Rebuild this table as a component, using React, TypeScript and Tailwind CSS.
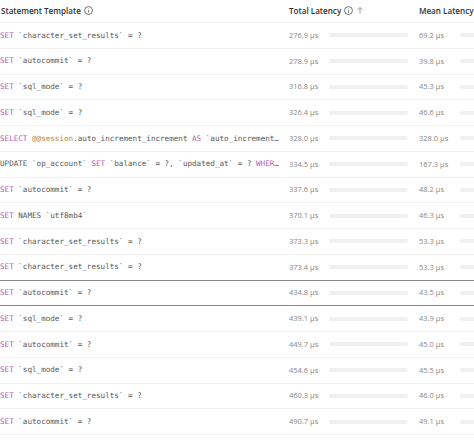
import React from "react";

type Part = { t: string; k?: "kw" | "var" };

const rows: { parts: Part[]; total: string; mean: string; selected?: boolean }[] = [
  { parts: [{ t: "SET", k: "kw" }, { t: " `character_set_results` = ?" }], total: "276.9 μs", mean: "69.2 μs" },
  { parts: [{ t: "SET", k: "kw" }, { t: " `autocommit` = ?" }], total: "278.9 μs", mean: "39.8 μs" },
  { parts: [{ t: "SET", k: "kw" }, { t: " `sql_mode` = ?" }], total: "316.8 μs", mean: "45.3 μs" },
  { parts: [{ t: "SET", k: "kw" }, { t: " `sql_mode` = ?" }], total: "326.4 μs", mean: "46.6 μs" },
  {
    parts: [
      { t: "SELECT", k: "kw" },
      { t: " " },
      { t: "@@session", k: "var" },
      { t: ".auto_increment_increment " },
      { t: "AS", k: "kw" },
      { t: " `auto_increment_increment`" },
    ],
    total: "328.0 μs",
    mean: "328.0 μs",
  },
  {
    parts: [
      { t: "UPDATE `op_account` " },
      { t: "SET", k: "kw" },
      { t: " `balance` = ?, `updated_at` = ? " },
      { t: "WHERE", k: "kw" },
      { t: " `id` = ?" },
    ],
    total: "334.5 μs",
    mean: "167.3 μs",
  },
  { parts: [{ t: "SET", k: "kw" }, { t: " `autocommit` = ?" }], total: "337.6 μs", mean: "48.2 μs" },
  { parts: [{ t: "SET", k: "kw" }, { t: " NAMES `utf8mb4`" }], total: "370.1 μs", mean: "46.3 μs" },
  { parts: [{ t: "SET", k: "kw" }, { t: " `character_set_results` = ?" }], total: "373.3 μs", mean: "53.3 μs" },
  { parts: [{ t: "SET", k: "kw" }, { t: " `character_set_results` = ?" }], total: "373.4 μs", mean: "53.3 μs" },
  { parts: [{ t: "SET", k: "kw" }, { t: " `autocommit` = ?" }], total: "434.8 μs", mean: "43.5 μs", selected: true },
  { parts: [{ t: "SET", k: "kw" }, { t: " `sql_mode` = ?" }], total: "439.1 μs", mean: "43.9 μs" },
  { parts: [{ t: "SET", k: "kw" }, { t: " `autocommit` = ?" }], total: "449.7 μs", mean: "45.0 μs" },
  { parts: [{ t: "SET", k: "kw" }, { t: " `sql_mode` = ?" }], total: "454.6 μs", mean: "45.5 μs" },
  { parts: [{ t: "SET", k: "kw" }, { t: " `character_set_results` = ?" }], total: "460.3 μs", mean: "46.0 μs" },
  { parts: [{ t: "SET", k: "kw" }, { t: " `autocommit` = ?" }], total: "490.7 μs", mean: "49.1 μs" },
];

function InfoIcon() {
  return (
    <svg width="9" height="9" viewBox="0 0 16 16" fill="none" stroke="#323130" strokeWidth="1.2">
      <circle cx="8" cy="8" r="7" />
      <line x1="8" y1="7" x2="8" y2="11.5" />
      <circle cx="8" cy="4.6" r="0.6" fill="#323130" stroke="none" />
    </svg>
  );
}

function ArrowUp() {
  return (
    <svg width="8" height="9" viewBox="0 0 16 16" fill="none" stroke="#605e5c" strokeWidth="1.2">
      <line x1="8" y1="2" x2="8" y2="14" />
      <polyline points="3,7 8,2 13,7" />
    </svg>
  );
}

export default function App() {
  return (
    <div className="w-[474px] h-[442px] overflow-hidden bg-white" style={{ fontFamily: '"Open Sans", sans-serif' }}>
      {/* Header */}
      <div className="flex h-[23px] items-center border-b border-[#f0efee] text-[8.1px] font-semibold text-[#323130]">
        <div className="w-[289px] shrink-0 flex items-center gap-[3px] pl-[1px]">
          Statement Template <InfoIcon />
        </div>
        <div className="w-[130px] shrink-0 flex items-center gap-[3px]">
          Total Latency <InfoIcon /> <ArrowUp />
        </div>
        <div className="shrink-0 whitespace-nowrap">Mean Latency</div>
      </div>

      {rows.map((r, i) => {
        const nextSelected = rows[i + 1]?.selected;
        const dark = r.selected || nextSelected;
        return (
          <div
            key={i}
            className={`flex h-[25.75px] items-center border-b ${dark ? "border-[#8a8886]" : "border-[#f3f2f1]"}`}
          >
            <div className="w-[289px] shrink-0 pr-[9px] overflow-hidden">
              <div
                className="truncate whitespace-pre text-[7.6px] text-[#575757]"
                style={{ fontFamily: '"DejaVu Sans Mono", monospace' }}
              >
                {r.parts.map((p, j) => (
                  <span
                    key={j}
                    className={p.k === "kw" ? "text-[#b05db3]" : p.k === "var" ? "text-[#c0853a]" : ""}
                  >
                    {p.t}
                  </span>
                ))}
              </div>
            </div>
            <div className="w-[130px] shrink-0 flex items-center text-[7.5px] text-[#8a8886]">
              <span className="w-[40px] shrink-0">{r.total}</span>
              <div className="w-[79px] h-[4px] rounded-full bg-[#f1f0ef]" />
            </div>
            <div className="flex-1 flex items-center text-[7.5px] text-[#8a8886]">
              <span className="w-[41px] shrink-0">{r.mean}</span>
              <div className="flex-1 h-[4px] rounded-l-full bg-[#f1f0ef]" />
            </div>
          </div>
        );
      })}
    </div>
  );
}
